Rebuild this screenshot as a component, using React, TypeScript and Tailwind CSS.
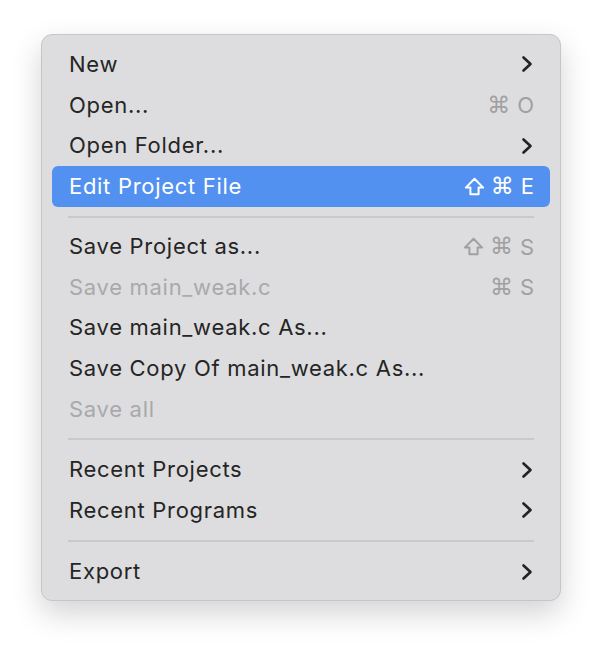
import React from "react";

type Item =
  | { type: "sep" }
  | { type: "item"; label: string; shortcut?: string[]; sub?: boolean; disabled?: boolean; active?: boolean };

const items: Item[] = [
  { type: "item", label: "New", sub: true },
  { type: "item", label: "Open...", shortcut: ["⌘", "O"] },
  { type: "item", label: "Open Folder...", sub: true },
  { type: "item", label: "Edit Project File", shortcut: ["⇧", "⌘", "E"], active: true },
  { type: "sep" },
  { type: "item", label: "Save Project as...", shortcut: ["⇧", "⌘", "S"] },
  { type: "item", label: "Save main_weak.c", shortcut: ["⌘", "S"], disabled: true },
  { type: "item", label: "Save main_weak.c As..." },
  { type: "item", label: "Save Copy Of main_weak.c As..." },
  { type: "item", label: "Save all", disabled: true },
  { type: "sep" },
  { type: "item", label: "Recent Projects", sub: true },
  { type: "item", label: "Recent Programs", sub: true },
  { type: "sep" },
  { type: "item", label: "Export", sub: true },
];

function Chevron() {
  return (
    <svg width="12" height="18" viewBox="0 0 12 18" className="text-[#222]">
      <path d="M2.5 2.5 L9.5 9 L2.5 15.5" fill="none" stroke="currentColor" strokeWidth="2.6" strokeLinecap="round" strokeLinejoin="round" />
    </svg>
  );
}

function Shift() {
  return (
    <svg width="21" height="19" viewBox="0 0 21 19">
      <path
        d="M10.5 1.8 L19.2 10.6 L14.6 10.6 L14.6 17.3 L6.4 17.3 L6.4 10.6 L1.8 10.6 Z"
        fill="none"
        stroke="currentColor"
        strokeWidth="2"
        strokeLinejoin="round"
      />
    </svg>
  );
}

export default function App() {
  return (
    <div className="min-h-[650px] w-[602px] bg-white pt-[34px] pl-[41px]" style={{ fontFamily: "Inter, 'Liberation Sans', sans-serif" }}>
      <div className="w-[520px] rounded-[11px] border border-[#c6c6c8] bg-[#dddddf] pt-[9px] pb-[8px] px-[10px] shadow-[0_12px_30px_rgba(0,0,0,0.18)]">
        {items.map((it, i) =>
          it.type === "sep" ? (
            <div key={i} className={`flex items-center px-[16px] ${i === 13 ? "h-[21px]" : "h-[19.5px]"}`}>
              <div className="h-[2px] w-full bg-[#c9c9cb]" />
            </div>
          ) : (
            <div
              key={i}
              className={`flex h-[40.7px] items-center justify-between rounded-[6px] pl-[17px] pr-[16px] text-[22px] ${
                it.active ? "bg-[#5391f0] text-white" : it.disabled ? "text-[#a9a9ab]" : "text-[#252525]"
              }`}
            >
              <span className="tracking-[0.7px]">{it.label}</span>
              {it.sub ? (
                <span className="pr-[1px]">
                  <Chevron />
                </span>
              ) : it.shortcut ? (
                <span className={`flex items-center gap-[6px] ${it.active ? "text-white" : "text-[#a0a0a2]"}`}>
                  {it.shortcut.map((s, j) =>
                    s === "⇧" ? (
                      <Shift key={j} />
                    ) : s === "⌘" ? (
                      <span key={j} className="text-[23px] leading-none" style={{ fontFamily: "'DejaVu Sans', sans-serif" }}>
                        ⌘
                      </span>
                    ) : (
                      <span key={j} className="ml-[1px] leading-none">
                        {s}
                      </span>
                    )
                  )}
                </span>
              ) : null}
            </div>
          )
        )}
      </div>
    </div>
  );
}
